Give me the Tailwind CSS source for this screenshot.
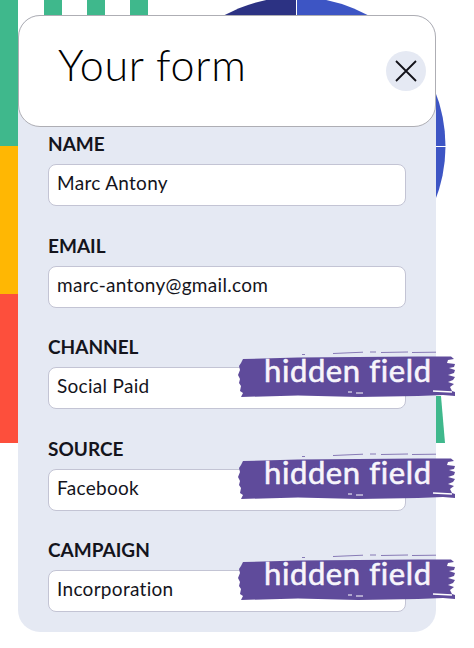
<!DOCTYPE html>
<html lang="en">
<head>
<meta charset="UTF-8" />
<title>Your form</title>
<script src="https://cdn.jsdelivr.net/npm/@tailwindcss/browser@4"></script>
</head>
<body class="bg-white">
<!-- brush stroke behind the hidden field tags -->
<svg class="hidden">
  <symbol id="brush" viewBox="0 0 218 50">
    <path fill="#5f4b9b" d="M5 9 L60 7.500 L120 7 L180 6.500 L213 6.500 L216 9 L210 10 L209 13 L217 14 L216 17 L211 18 L217 20 L216 23 L210 25 L217 27 L215 30 L210 32 L216 34 L212 37 L214 41 L217 42 L217 46 L205 45 L180 46 L120 47 L60 45.500 L3 47 L5 43 L2 41 L3 36 L1 33 L2 29 L0 25 L2 20 L1 16 L3 13 Z" />
    <path fill="none" stroke="#5f4b9b" stroke-width="1" stroke-opacity="0.700" d="M95 3.500 L125 2.200 M132 2 L138 2 M143 2.500 L170 2 M174 2.500 L198 2.200 M64 4.500 L67 4.500" />
    <path fill="none" stroke="#ffffff" stroke-width="1" d="M110 42 L114 42 M118 43 L125 43" />
    <path fill="none" stroke="#ffffff" stroke-width="1.500" d="M195 41 L214 42" />
  </symbol>
</svg>

<div class="relative w-[474px] h-[648px] overflow-hidden font-['Lato',sans-serif] text-[#14141c]">
  <!-- artwork behind the form -->
  <svg class="absolute inset-0" width="474" height="648" viewBox="0 0 474 648">
    <rect x="0" y="0" width="18" height="146" fill="#3fb88c" />
    <rect x="0" y="146" width="18" height="148" fill="#ffb703" />
    <rect x="0" y="294" width="18" height="149" fill="#fd4f3c" />
    <rect x="44" y="0" width="18" height="16" fill="#3fb88c" />
    <rect x="87" y="0" width="18" height="16" fill="#3fb88c" />
    <rect x="130" y="0" width="18" height="16" fill="#3fb88c" />
    <path d="M296 -3 A149 149 0 0 0 147 146 L296 146 Z" fill="#2c3283" />
    <path d="M297 -3 A149 149 0 0 1 445.500 146 L297 146 Z" fill="#3d55c4" />
    <path d="M445.500 147 A149 149 0 0 1 300 295 L297 147 Z" fill="#3d55c4" />
    <path d="M436 396 L441 396 L445 443 L436 443 Z" fill="#3fb88c" />
  </svg>

  <div class="relative ml-[18px] mt-[15px] w-[418px] h-[617px] bg-[#e5e9f3] rounded-[22px]">
    <div class="h-[112px] bg-white rounded-[22px] border border-[#aeaeb4] flex justify-between pl-[39px] pr-[9px]">
      <h1 class="text-[43px] leading-[50px] mt-[24px] font-light tracking-[0.7px] text-black">Your form</h1>
      <button class="w-10 h-10 mt-[35px] rounded-full bg-[#e5e9f3] flex items-center justify-center">
        <svg width="24" height="24" viewBox="0 0 24 24" fill="none" stroke="#111118" stroke-width="1.800"><path d="M2 2 L22 22 M22 2 L2 22" /></svg>
      </button>
    </div>

    <div class="flex flex-col gap-[20.5px] pl-[30px] pr-[30px] pt-[6px]">
      <div class="h-[81px]">
        <label class="block text-[19px] leading-[22px] font-bold mb-[9px]">NAME</label>
        <div class="h-[42px] bg-white rounded-[8px] border border-[#c3c4d4] pl-[8px] text-[19px] leading-[36px] tracking-[0.3px]">Marc Antony</div>
      </div>
      <div class="h-[81px]">
        <label class="block text-[19px] leading-[22px] font-bold mb-[9px]">EMAIL</label>
        <div class="h-[42px] bg-white rounded-[8px] border border-[#c3c4d4] pl-[8px] text-[19px] leading-[36px] tracking-[0.3px]">marc-antony@gmail.com</div>
      </div>
      <div class="h-[81px] relative">
        <label class="block text-[19px] leading-[22px] font-bold mb-[9px]">CHANNEL</label>
        <div class="h-[42px] bg-white rounded-[8px] border border-[#c3c4d4] pl-[8px] text-[19px] leading-[36px] tracking-[0.3px]">Social Paid</div>
        <div class="absolute left-[190px] top-[14px] w-[218px] h-[50px]">
          <svg class="absolute inset-0" width="218" height="50"><use href="#brush" /></svg>
          <span class="absolute left-[26px] top-[2px] text-[31px] leading-[36px] tracking-[0.6px] text-[#f7f5fb] [-webkit-text-stroke:0.6px_#f7f5fb] whitespace-nowrap">hidden field</span>
        </div>
      </div>
      <div class="h-[81px] relative">
        <label class="block text-[19px] leading-[22px] font-bold mb-[9px]">SOURCE</label>
        <div class="h-[42px] bg-white rounded-[8px] border border-[#c3c4d4] pl-[8px] text-[19px] leading-[36px] tracking-[0.3px]">Facebook</div>
        <div class="absolute left-[190px] top-[14px] w-[218px] h-[50px]">
          <svg class="absolute inset-0" width="218" height="50"><use href="#brush" /></svg>
          <span class="absolute left-[26px] top-[2px] text-[31px] leading-[36px] tracking-[0.6px] text-[#f7f5fb] [-webkit-text-stroke:0.6px_#f7f5fb] whitespace-nowrap">hidden field</span>
        </div>
      </div>
      <div class="h-[81px] relative">
        <label class="block text-[19px] leading-[22px] font-bold mb-[9px]">CAMPAIGN</label>
        <div class="h-[42px] bg-white rounded-[8px] border border-[#c3c4d4] pl-[8px] text-[19px] leading-[36px] tracking-[0.3px]">Incorporation</div>
        <div class="absolute left-[190px] top-[14px] w-[218px] h-[50px]">
          <svg class="absolute inset-0" width="218" height="50"><use href="#brush" /></svg>
          <span class="absolute left-[26px] top-[2px] text-[31px] leading-[36px] tracking-[0.6px] text-[#f7f5fb] [-webkit-text-stroke:0.6px_#f7f5fb] whitespace-nowrap">hidden field</span>
        </div>
      </div>
    </div>
  </div>
</div>
</body>
</html>
